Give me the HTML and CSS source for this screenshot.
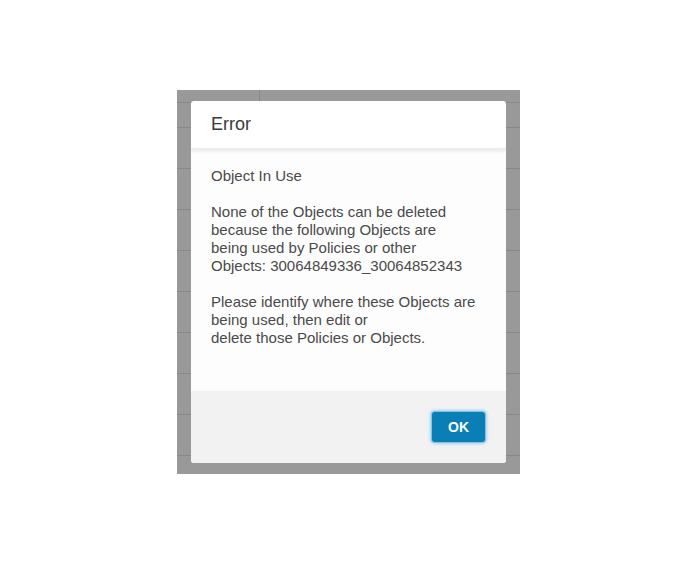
FILE: index.html
```html
<!DOCTYPE html>
<html>
<head>
<meta charset="utf-8">
<link rel="stylesheet" href="styles.css">
</head>
<body>
<div class="stage">
  <div class="backdrop">
    <div class="vline"></div>
    <div class="hline" style="top:12px"></div>
    <div class="hline" style="top:37px"></div>
    <div class="hline" style="top:78px"></div>
    <div class="hline" style="top:119px"></div>
    <div class="hline" style="top:160px"></div>
    <div class="hline" style="top:201px"></div>
    <div class="hline" style="top:242px"></div>
    <div class="hline" style="top:283px"></div>
    <div class="hline" style="top:324px"></div>
    <div class="hline" style="top:365px"></div>
    <div class="dialog">
      <div class="header">Error</div>
      <div class="body">Object In Use<br><br>None of the Objects can be deleted<br>because the following Objects are<br>being used by Policies or other<br>Objects: 30064849336_30064852343<br><br>Please identify where these Objects are<br>being used, then edit or<br>delete those Policies or Objects.</div>
      <div class="footer"><button class="ok">OK</button></div>
    </div>
  </div>
</div>
</body>
</html>
```
FILE: styles.css
```css
html, body {
  margin: 0;
  padding: 0;
  background: #ffffff;
  font-family: "Liberation Sans", Arial, sans-serif;
}
.stage {
  width: 696px;
  height: 564px;
  padding-top: 90px;
  padding-left: 177px;
  box-sizing: border-box;
}
.backdrop {
  position: relative;
  width: 343px;
  height: 384px;
  background: #999999;
  padding: 11px 14px 0 14px;
  box-sizing: border-box;
}
.hline {
  position: absolute;
  left: 0;
  right: 0;
  height: 1px;
  background: #888888;
}
.vline {
  position: absolute;
  left: 82px;
  top: 0;
  width: 1px;
  height: 11px;
  background: #888888;
}
.dialog {
  position: relative;
  z-index: 1;
  width: 315px;
  height: 362px;
  background: #ffffff;
  border-radius: 3px;
  display: flex;
  flex-direction: column;
  overflow: hidden;
}
.header {
  height: 48px;
  box-sizing: border-box;
  padding: 0 20px;
  line-height: 46px;
  font-size: 18px;
  color: #3a3a3a;
  box-shadow: 0 2px 4px rgba(0,0,0,0.09);
  border-bottom: 1px solid #ececec;
  position: relative;
  z-index: 1;
}
.body {
  flex: 1;
  padding: 18px 20px 0 20px;
  font-size: 15px;
  line-height: 18px;
  color: #4a4a4a;
  background: #fdfdfd;
}
.footer {
  height: 72px;
  background: #f2f2f2;
  display: flex;
  align-items: center;
  justify-content: flex-end;
  padding: 0 21px 0 0;
}
.ok {
  width: 53px;
  height: 30px;
  border: none;
  border-radius: 3px;
  background: #0a7fb5;
  color: #ffffff;
  font-family: "Liberation Sans", Arial, sans-serif;
  font-weight: 700;
  font-size: 14px;
  box-shadow: 0 0 0 1px #7fc3e6, 0 0 3px 2px rgba(120,190,230,0.6);
  padding: 0;
}
```
